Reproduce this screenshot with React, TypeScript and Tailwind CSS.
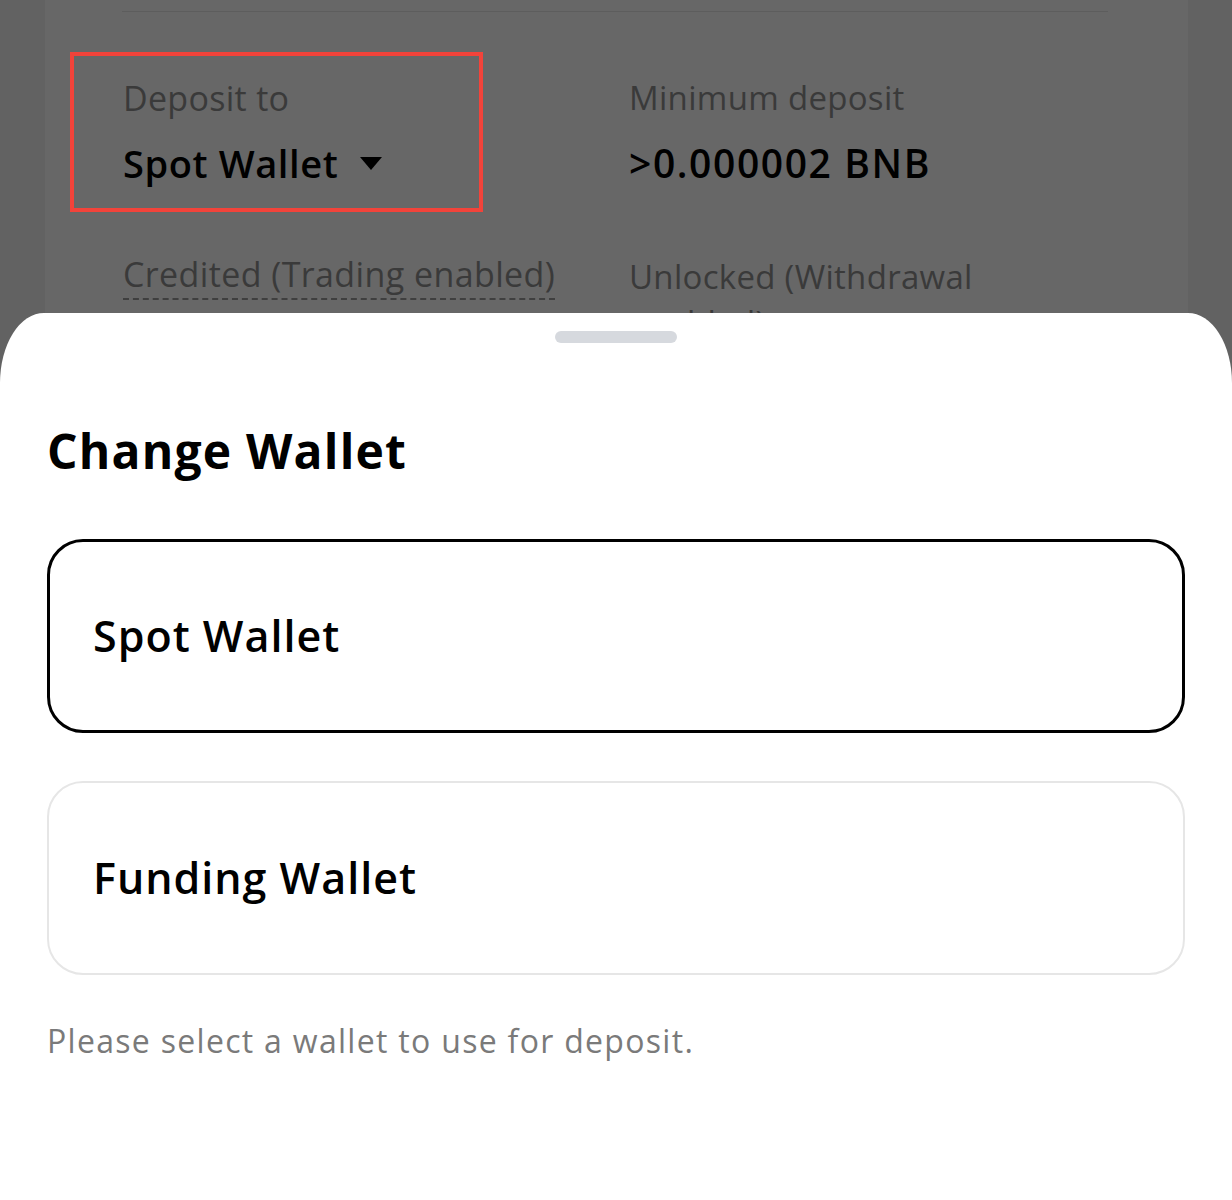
import React from "react";

const font = { fontFamily: '"Open Sans", "Noto Sans", sans-serif' };

export default function App() {
  return (
    <div className="relative h-[1200px] w-[1232px] overflow-hidden bg-[#626262]" style={font}>
      {/* Page card behind the overlay */}
      <div className="ml-[45px] mr-[44px] h-full bg-[#676767]">
        <div className="ml-[77px] mr-[80px] h-[12px] border-b border-[#5d5d5d]" />
        <div className="flex pt-[40px] pl-[25px]">
          <div className="flex h-[160px] w-[413px] flex-col border-4 border-[#f2433a] pl-[49px] pt-[22px]">
            <div className="text-[34px] leading-[40px] tracking-[0.3px] text-[#3a3a3a]">Deposit to</div>
            <div className="mt-[23px] flex items-center gap-[22px] text-[38px] leading-[44px] font-semibold tracking-[0.6px] text-black">
              <span>Spot Wallet</span>
              <svg width="22" height="14" viewBox="0 0 22 14" className="mt-[2px]">
                <path d="M0 0 H22 L11 13 Z" fill="#000" />
              </svg>
            </div>
          </div>
          <div className="ml-[146px] flex flex-col pt-[26px]">
            <div className="text-[33px] leading-[40px] tracking-[0.3px] text-[#3a3a3a]">Minimum deposit</div>
            <div className="mt-[23px] text-[39px] leading-[44px] font-semibold tracking-[1.6px] text-black">&gt;0.000002 BNB</div>
          </div>
        </div>
        <div className="flex pl-[78px] pt-[42px]">
          <div className="w-[506px]">
            <span className="border-b-2 border-dashed border-[#3f3f3f] pb-[1px] text-[34px] leading-[40px] tracking-[0.4px] text-[#3a3a3a]">
              Credited (Trading enabled)
            </span>
          </div>
          <div className="w-[420px] text-[33px] leading-[46px] tracking-[0.3px] text-[#3a3a3a]">Unlocked (Withdrawal enabled)</div>
        </div>
      </div>

      {/* Bottom sheet */}
      <div className="absolute inset-x-0 top-[313px] bottom-0 rounded-tl-[44px_70px] rounded-tr-[44px_70px] bg-white px-[47px]">
        <div className="mx-auto mt-[18px] h-[12px] w-[122px] rounded-full bg-[#d6d9de]" />
        <h2 className="mt-[80px] text-[48px] font-bold leading-[56px] tracking-[1.2px] text-black">Change Wallet</h2>
        <div className="mt-[60px] flex h-[194px] items-center rounded-[36px] border-[3px] border-black pl-[43px]">
          <span className="text-[43px] font-semibold tracking-[1px] text-black">Spot Wallet</span>
        </div>
        <div className="mt-[48px] flex h-[194px] items-center rounded-[36px] border-2 border-[#e6e6e6] pl-[44px]">
          <span className="text-[43px] font-semibold tracking-[1px] text-black">Funding Wallet</span>
        </div>
        <p className="mt-[46px] text-[32px] leading-[40px] tracking-[1.3px] text-[#7a7a7a]">Please select a wallet to use for deposit.</p>
      </div>
    </div>
  );
}
